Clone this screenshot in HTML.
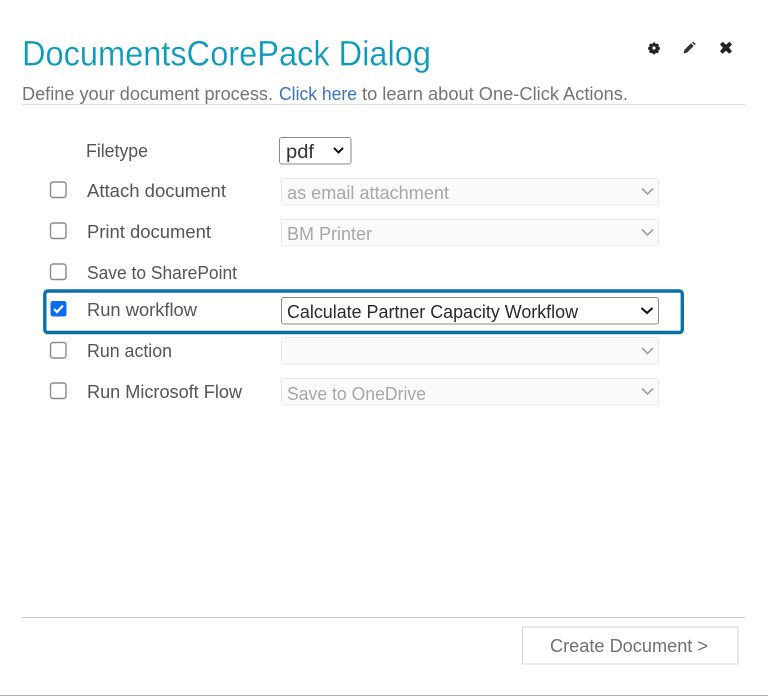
<!DOCTYPE html>
<html><head><meta charset="utf-8"><style>
html,body{margin:0;padding:0;background:#fff;width:768px;height:696px;overflow:hidden}
svg{display:block;font-family:"Liberation Sans",sans-serif}
.l{font-size:18px;fill:#555}
.d{font-size:18px;fill:#a8a8a8}
.dis{fill:#fafafa;stroke:#e8e8e8;stroke-width:1}
.cb{fill:#fff;stroke:#8a8a8a;stroke-width:1.4}
.cd{fill:none;stroke:#a0a0a0;stroke-width:1.6}
.ce{fill:none;stroke:#111;stroke-width:2}
</style></head><body>
<svg width="768" height="696" viewBox="0 0 768 696" xmlns="http://www.w3.org/2000/svg">
<text x="22" y="65.500" font-size="35.500" fill="#0a9bbd" stroke="#fff" stroke-width=".25" textLength="409" lengthAdjust="spacingAndGlyphs">DocumentsCorePack Dialog</text>
<text x="22" y="100" font-size="18" fill="#747474" textLength="251" lengthAdjust="spacingAndGlyphs">Define your document process.</text>
<text x="279" y="100" font-size="18" fill="#3a74c4" textLength="78" lengthAdjust="spacingAndGlyphs">Click here</text>
<text x="362" y="100" font-size="18" fill="#747474" textLength="266" lengthAdjust="spacingAndGlyphs">to learn about One-Click Actions.</text>
<rect x="22" y="104" width="723" height="1" fill="#dcdcdc"/>

<path d="M652.800 42.500h2.400l.5 1.700 1.600-.8 1.700 1.700-.8 1.600 1.700.5v2.400l-1.700.5.8 1.600-1.700 1.700-1.600-.8-.5 1.700h-2.400l-.5-1.700-1.600.8-1.700-1.700.8-1.600-1.700-.5v-2.400l1.700-.5-.8-1.600 1.700-1.700 1.600.8z" fill="#222"/>
<circle cx="654" cy="48" r="1.600" fill="#fff"/>
<path d="M683.500 53.500l1-3.700 6.500-6.500 2.700 2.700-6.500 6.500z" fill="#333"/>
<path d="M692 42.600l1.300-1 2.400 2.400-1 1.300z" fill="#333"/>
<path d="M720 44.400l2.600-2.600 3.400 3 3.400-3 2.600 2.600-3 3.400 3 3.400-2.600 2.600-3.400-3-3.400 3-2.600-2.600 3-3.400z" fill="#222"/>

<text x="86" y="157" class="l" textLength="62" lengthAdjust="spacingAndGlyphs">Filetype</text>
<text x="87" y="197" class="l" textLength="139" lengthAdjust="spacingAndGlyphs">Attach document</text>
<text x="87" y="238" class="l" textLength="124" lengthAdjust="spacingAndGlyphs">Print document</text>
<text x="87" y="279" class="l" textLength="150" lengthAdjust="spacingAndGlyphs">Save to SharePoint</text>
<text x="87" y="316" class="l" textLength="110" lengthAdjust="spacingAndGlyphs">Run workflow</text>
<text x="87" y="357" class="l" textLength="85" lengthAdjust="spacingAndGlyphs">Run action</text>
<text x="87" y="398" class="l" textLength="155" lengthAdjust="spacingAndGlyphs">Run Microsoft Flow</text>

<rect x="50.500" y="182" width="15.500" height="15.500" rx="2.500" class="cb"/>
<rect x="50.500" y="223" width="15.500" height="15.500" rx="2.500" class="cb"/>
<rect x="50.500" y="264" width="15.500" height="15.500" rx="2.500" class="cb"/>
<rect x="50.500" y="342.500" width="15.500" height="15.500" rx="2.500" class="cb"/>
<rect x="50.500" y="383" width="15.500" height="15.500" rx="2.500" class="cb"/>
<rect x="50.500" y="301" width="16" height="15.500" rx="2.500" fill="#0a6cf5"/>
<path d="M54 309l3 3 6-6.500" fill="none" stroke="#fff" stroke-width="2.200"/>

<rect x="279.500" y="137.500" width="71.500" height="26.500" rx="2.500" fill="#fff" stroke="#8a8a8a" stroke-width="1"/>
<text x="286" y="158" font-size="19" fill="#333" textLength="28" lengthAdjust="spacingAndGlyphs">pdf</text>
<path class="ce" d="M334 148l4.500 4.500 4.500-4.500"/>

<rect x="281.500" y="178.500" width="377" height="26.500" rx="2.500" class="dis"/>
<text x="287" y="199" class="d" textLength="162" lengthAdjust="spacingAndGlyphs">as email attachment</text>
<path class="cd" d="M642 188.500l5.500 5.500 5.500-5.500"/>
<rect x="281.500" y="219.500" width="377" height="26.500" rx="2.500" class="dis"/>
<text x="287" y="240" class="d" textLength="85" lengthAdjust="spacingAndGlyphs">BM Printer</text>
<path class="cd" d="M642 229.500l5.500 5.500 5.500-5.500"/>
<rect x="281.500" y="337.500" width="377" height="26.500" rx="2.500" class="dis"/>
<path class="cd" d="M642 348l5.500 5.500 5.500-5.500"/>
<rect x="281.500" y="378.500" width="377" height="26.500" rx="2.500" class="dis"/>
<text x="287" y="400" class="d" textLength="139" lengthAdjust="spacingAndGlyphs">Save to OneDrive</text>
<path class="cd" d="M642 388.500l5.500 5.500 5.500-5.500"/>

<rect x="44.800" y="291" width="637.500" height="41.500" rx="3" fill="none" stroke="#0b72a8" stroke-width="3.400"/>
<rect x="281.500" y="297.500" width="377" height="26.500" rx="2.500" fill="#fff" stroke="#8a8a8a" stroke-width="1"/>
<text x="287" y="318" font-size="18" fill="#2a2a2a" textLength="291" lengthAdjust="spacingAndGlyphs">Calculate Partner Capacity Workflow</text>
<path class="ce" d="M641.500 308l5.500 5 5.500-5"/>

<rect x="22" y="617" width="723" height="1" fill="#c4c4c4"/>
<rect x="522.500" y="627" width="215.500" height="37" fill="#fff" stroke="#d4d4d4" stroke-width="1"/>
<text x="550" y="652" font-size="18" fill="#707070" textLength="158" lengthAdjust="spacingAndGlyphs">Create Document &gt;</text>
<rect x="0" y="695" width="768" height="1" fill="#b0b0b0"/>
</svg>
</body></html>
